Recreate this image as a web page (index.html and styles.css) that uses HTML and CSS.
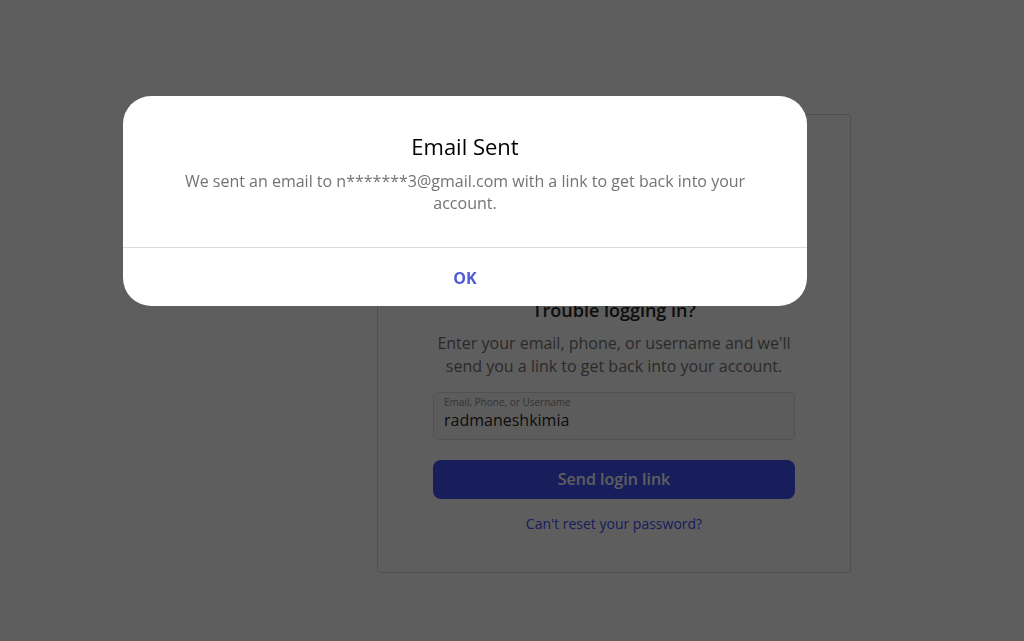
FILE: index.html
```html
<!DOCTYPE html>
<html>
    <head>
        <meta charset="utf-8">
        <title>Email Sent</title>
        <meta name="viewport" content="width=device-width, initial-scale=1.0">
        <link rel="stylesheet" href="styles.css">
    </head>
    <body>
        <div class="page">
            <div class="card">
                <div class="card-top"></div>
                <h2 class="card-title">Trouble logging in?</h2>
                <p class="card-text">Enter your email, phone, or username and we'll send you a link to get back into your account.</p>
                <div class="field">
                    <span class="field-label">Email, Phone, or Username</span>
                    <span class="field-value">radmaneshkimia</span>
                </div>
                <a class="btn" href="#">Send login link</a>
                <a class="reset" href="#">Can't reset your password?</a>
            </div>
        </div>
        <div class="overlay">
            <div class="modal">
                <div class="modal-body">
                    <h3 class="modal-title">Email Sent</h3>
                    <p class="modal-text">We sent an email to n*******3@gmail.com with a link to get back into your account.</p>
                </div>
                <a class="modal-ok" href="#">OK</a>
            </div>
        </div>
    </body>
</html>
```

FILE: styles.css
```css
html,body{margin:0; padding:0; height:100%}
body{font-family:"Open Sans", "Noto Sans", sans-serif; background-color:#fff; color:#262626}
.page{display:flex; justify-content:center; padding-top:114px; padding-left:204px}
.card{width:474px; height:459px; box-sizing:border-box; border:1px solid #d6d6d6; border-radius:3px; padding:0 55px; display:flex; flex-direction:column; align-items:center}
.card-top{height:183px}
.card-title{margin:0; font-size:18px; font-weight:600; line-height:24px; color:#262626}
.card-text{margin:10px 0 14px; font-size:16px; line-height:23px; color:#737373; text-align:center}
.field{align-self:stretch; height:48px; box-sizing:border-box; border:1px solid #dbdbdb; border-radius:6px; background:#fafafa; padding:3px 10px; display:flex; flex-direction:column}
.field-label{font-size:10px; line-height:13px; color:#8e8e8e}
.field-value{font-size:16px; line-height:22px; color:#262626}
.btn{align-self:stretch; margin-top:20px; height:39px; line-height:39px; border-radius:8px; background:#4150f7; color:#fff; text-align:center; text-decoration:none; font-weight:600; font-size:16px}
.reset{margin-top:15px; font-size:14px; color:#4150f7; text-decoration:none}

.overlay{position:fixed; left:0; top:0; right:0; bottom:0; background:rgba(0,0,0,0.63)}
.modal{position:absolute; left:123px; top:96px; width:684px; background:#fff; border-radius:28px; overflow:hidden}
.modal-body{padding:35px 48px 33px; text-align:center; border-bottom:1px solid #dbdbdb}
.modal-title{margin:0 0 9px; font-size:22px; font-weight:400; line-height:30px; color:#000}
.modal-text{margin:0; font-size:16px; line-height:22px; color:#737373}
.modal-ok{display:block; height:58px; line-height:60px; text-align:center; color:#4f5bd5; font-weight:700; font-size:16px; text-decoration:none}
```
